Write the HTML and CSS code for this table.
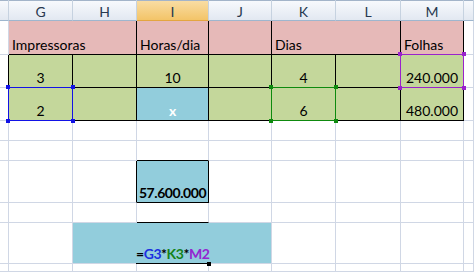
FILE: index.html
```html
<!DOCTYPE html>
<html lang="pt">
<head>
<meta charset="utf-8">
<title>Planilha</title>
<link rel="stylesheet" href="styles.css">
</head>
<body>
<div class="sheet">
  <div class="hd"></div>
  <div class="hd">G</div>
  <div class="hd">H</div>
  <div class="hd active">I</div>
  <div class="hd">J</div>
  <div class="hd">K</div>
  <div class="hd">L</div>
  <div class="hd">M</div>
  <div class="hd"></div>

  <div class="c"></div>
  <div class="c pink span2">Impressoras</div>
  <div class="c pink">Horas/dia</div>
  <div class="c pink"></div>
  <div class="c pink span2">Dias</div>
  <div class="c pink">Folhas</div>
  <div class="c"></div>

  <div class="c edge"></div>
  <div class="c green num">3</div>
  <div class="c green"></div>
  <div class="c green num">10</div>
  <div class="c green"></div>
  <div class="c green num">4</div>
  <div class="c green"></div>
  <div class="c green num ref">240.000<span class="box purple"><i class="h tl"></i><i class="h tr"></i><i class="h bl"></i><i class="h br"></i></span></div>
  <div class="c"></div>

  <div class="c edge"></div>
  <div class="c green num ref">2<span class="box blue-ref"><i class="h tl"></i><i class="h tr"></i><i class="h bl"></i><i class="h br"></i></span></div>
  <div class="c green"></div>
  <div class="c aqua boxed num strong white">x</div>
  <div class="c green"></div>
  <div class="c green num ref">6<span class="box green-ref"><i class="h tl"></i><i class="h tr"></i><i class="h bl"></i><i class="h br"></i></span></div>
  <div class="c green"></div>
  <div class="c green num">480.000</div>
  <div class="c"></div>

  <div class="c"></div><div class="c"></div><div class="c"></div><div class="c"></div><div class="c"></div><div class="c"></div><div class="c"></div><div class="c"></div><div class="c"></div>

  <div class="c"></div><div class="c"></div><div class="c"></div><div class="c bb"></div><div class="c"></div><div class="c"></div><div class="c"></div><div class="c"></div><div class="c"></div>

  <div class="c"></div><div class="c"></div><div class="c br"></div>
  <div class="c aqua boxed num strong">57.600.000</div>
  <div class="c"></div><div class="c"></div><div class="c"></div><div class="c"></div><div class="c"></div>

  <div class="c"></div><div class="c"></div><div class="c"></div><div class="c bb"></div><div class="c"></div><div class="c"></div><div class="c"></div><div class="c"></div><div class="c"></div>

  <div class="c"></div><div class="c"></div>
  <div class="c aqua flush"></div>
  <div class="c aqua flush bb edit strong ref">=<span class="fg">G3</span>*<span class="fk">K3</span>*<span class="fm">M2</span><span class="caret"></span><span class="fill"></span></div>
  <div class="c aqua"></div>
  <div class="c"></div><div class="c"></div><div class="c"></div><div class="c"></div>

  <div class="c"></div><div class="c"></div><div class="c"></div><div class="c"></div><div class="c"></div><div class="c"></div><div class="c"></div><div class="c"></div><div class="c"></div>
</div>
</body>
</html>
```

FILE: styles.css
```css
* {
  box-sizing: border-box;
  margin: 0;
  padding: 0;
}

html,
body {
  background: #ffffff;
}

body {
  margin: 0;
  font-family: Lato, "Open Sans", sans-serif;
  font-size: 14px;
  color: #000000;
}

.sheet {
  display: grid;
  grid-template-columns: 9px 64px 64px 72px 63px 64px 65px 63px 10px;
  grid-template-rows: 21px 34px 33px 33px 20px 20px 42px 20px 41px 8px;
  width: 474px;
  height: 272px;
  overflow: hidden;
}

.hd {
  display: flex;
  align-items: flex-end;
  justify-content: center;
  line-height: 17px;
  color: #27384f;
  background: linear-gradient(#f8fafd, #e2e8f1);
  border-right: 1px solid #c6d2e0;
  border-bottom: 1px solid #9eb6ce;
  box-shadow: inset 0 1px 0 #a3b4c9;
}

.hd.active {
  background: linear-gradient(#f9dea6, #f3c468);
  border-bottom-color: #e3a540;
}

.c {
  display: flex;
  align-items: flex-end;
  padding: 0 3px 1px;
  line-height: 17px;
  white-space: nowrap;
  border-right: 1px solid #d0d7e5;
  border-bottom: 1px solid #d0d7e5;
}

.span2 {
  grid-column: span 2;
}

.pink {
  background: #e6b9b8;
  border-color: #000000;
}

.green {
  background: #c4d79b;
  border-color: #000000;
}

.aqua {
  background: #92cddc;
}

.boxed {
  border-color: #000000;
}

.flush {
  border-right-color: #92cddc;
}

.edge,
.br {
  border-right-color: #000000;
}

.bb {
  border-bottom-color: #000000;
}

.num {
  justify-content: center;
}

.strong {
  font-weight: 700;
  letter-spacing: -0.45px;
}

.white {
  color: #ffffff;
}

.ref {
  position: relative;
}

.edit {
  padding-left: 0;
  margin-left: -1px;
  overflow: visible;
}

.fg {
  color: #1a2fe0;
}

.fk {
  color: #14821a;
}

.fm {
  color: #9326d0;
}

.caret {
  display: inline-block;
  width: 1px;
  height: 16px;
  margin-left: 1px;
  background: #000000;
  align-self: flex-end;
  margin-bottom: 1px;
}

.fill {
  position: absolute;
  right: -3px;
  bottom: -3px;
  width: 4px;
  height: 4px;
  background: #000000;
  z-index: 3;
}

.box {
  position: absolute;
  inset: -1px;
  border: 1px solid currentColor;
  z-index: 2;
}

.box.blue-ref {
  color: #1212e6;
}

.box.green-ref {
  color: #0e8a0e;
}

.box.purple {
  color: #9a22cc;
}

.h {
  position: absolute;
  width: 4px;
  height: 4px;
  background: currentColor;
}

.h.tl {
  left: -3px;
  top: -3px;
}

.h.tr {
  right: -3px;
  top: -3px;
}

.h.bl {
  left: -3px;
  bottom: -3px;
}

.h.br {
  right: -3px;
  bottom: -3px;
}
```
